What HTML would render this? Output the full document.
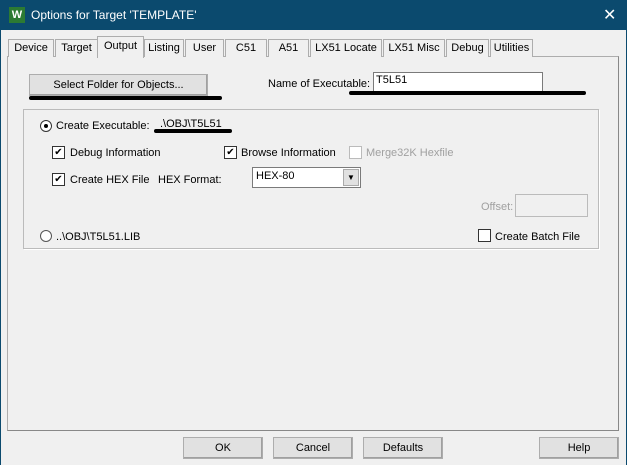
<!DOCTYPE html><html><head><style>
*{box-sizing:border-box}
body{margin:0;width:627px;height:465px;overflow:hidden;background:#f0f0f0;font-family:"Liberation Sans",sans-serif;font-size:11px;color:#000;position:relative}
.a{position:absolute;white-space:nowrap}
.title{left:0;top:0;width:627px;height:30px;background:#0b4a6e;color:#fff;font-size:12px}
.tab{position:absolute;top:39px;height:18px;border:1px solid #adadad;border-bottom:none;background:#f0f0f0;text-align:center;line-height:16px}
.btn{position:absolute;border:1px solid #adadad;background:#e1e1e1;text-align:center;height:22px;line-height:20px;box-shadow:inset -1px -1px #a0a0a0}
.cb{position:absolute;width:13px;height:13px;border:1px solid #333;background:#fff;font-size:10px;line-height:11px;text-align:center}
.bl{position:absolute;height:4px;background:#000;border-radius:2px}
</style></head><body>
<div class="a title"><div class="a" style="left:9px;top:7px;width:16px;height:16px;background:#2c7a33;color:#fff;font-weight:bold;font-size:11px;text-align:center;line-height:16px">W</div><div class="a" style="left:31px;top:8px">Options for Target 'TEMPLATE'</div><div class="a" style="left:603px;top:5px;font-size:16px">✕</div></div>
<div class="a" style="left:0;top:30px;width:1px;height:435px;background:#0b4a6e"></div>
<div class="a" style="left:626px;top:30px;width:1px;height:435px;background:#0b4a6e"></div>
<div class="a" style="left:7px;top:56px;width:612px;height:375px;border:1px solid #adadad;border-right-color:#888;border-bottom-color:#888;background:#f0f0f0"></div>
<div class="tab" style="left:8px;width:46px">Device</div>
<div class="tab" style="left:55px;width:43px">Target</div>
<div class="tab" style="left:144px;width:40px">Listing</div>
<div class="tab" style="left:185px;width:39px">User</div>
<div class="tab" style="left:225px;width:42px">C51</div>
<div class="tab" style="left:268px;width:41px">A51</div>
<div class="tab" style="left:310px;width:72px">LX51 Locate</div>
<div class="tab" style="left:383px;width:62px">LX51 Misc</div>
<div class="tab" style="left:446px;width:43px">Debug</div>
<div class="tab" style="left:490px;width:43px">Utilities</div>
<div class="tab" style="left:97px;top:36px;height:22px;width:47px;line-height:18px;z-index:2">Output</div>
<div class="btn" style="left:29px;top:74px;width:179px">Select Folder for Objects...</div>
<div class="bl" style="left:29px;top:96px;width:193px"></div>
<div class="a" style="left:268px;top:78px">Name of Executable:</div>
<div class="a" style="left:373px;top:72px;width:170px;height:20px;border:1px solid #7a7a7a;background:#fff;padding:1px 2px">T5L51</div>
<div class="bl" style="left:349px;top:91px;width:237px"></div>
<div class="a" style="left:23px;top:109px;width:576px;height:140px;border:1px solid #bbb;box-shadow:1px 1px #fff"></div>
<div class="a" style="left:40px;top:120px;width:12px;height:12px;border:1px solid #333;border-radius:50%;background:#fff"><div class="a" style="left:3px;top:3px;width:4px;height:4px;background:#000;border-radius:50%"></div></div>
<div class="a" style="left:56px;top:120px">Create Executable:</div>
<div class="a" style="left:160px;top:118px">.\OBJ\T5L51</div>
<div class="bl" style="left:154px;top:129px;width:78px"></div>
<div class="cb" style="left:52px;top:146px">✔</div><div class="a" style="left:70px;top:147px">Debug Information</div>
<div class="cb" style="left:224px;top:146px">✔</div><div class="a" style="left:241px;top:147px">Browse Information</div>
<div class="cb" style="left:349px;top:146px;border-color:#bbb"></div><div class="a" style="left:366px;top:147px;color:#a0a0a0">Merge32K Hexfile</div>
<div class="cb" style="left:52px;top:173px">✔</div><div class="a" style="left:70px;top:174px">Create HEX File</div>
<div class="a" style="left:158px;top:174px">HEX Format:</div>
<div class="a" style="left:252px;top:167px;width:109px;height:21px;border:1px solid #7a7a7a;background:#fff;padding:2px 3px">HEX-80<div class="a" style="right:1px;top:1px;width:16px;height:17px;background:#e1e1e1;border:1px solid #aaa;font-size:8px;text-align:center;line-height:15px">▼</div></div>
<div class="a" style="left:481px;top:201px;color:#a0a0a0">Offset:</div>
<div class="a" style="left:515px;top:194px;width:73px;height:23px;border:1px solid #bbb"></div>
<div class="a" style="left:40px;top:230px;width:12px;height:12px;border:1px solid #555;border-radius:50%;background:#fff"></div>
<div class="a" style="left:56px;top:231px">..\OBJ\T5L51.LIB</div>
<div class="cb" style="left:478px;top:229px"></div><div class="a" style="left:495px;top:231px">Create Batch File</div>
<div class="btn" style="left:183px;top:437px;width:80px">OK</div>
<div class="btn" style="left:273px;top:437px;width:80px">Cancel</div>
<div class="btn" style="left:363px;top:437px;width:80px">Defaults</div>
<div class="btn" style="left:539px;top:437px;width:80px">Help</div>
</body></html>
